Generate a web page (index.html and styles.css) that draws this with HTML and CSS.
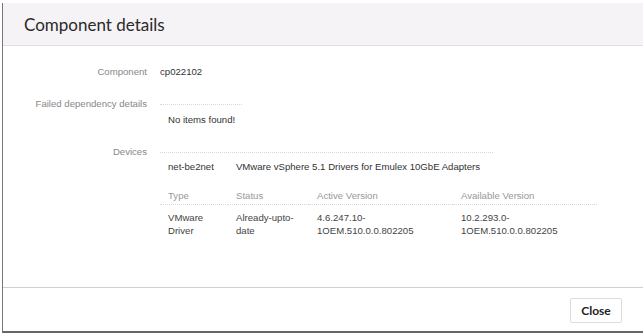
FILE: index.html
```html
<!DOCTYPE html>
<html>
<head>
<meta charset="utf-8">
<link rel="stylesheet" href="styles.css">
</head>
<body>
<div class="dialog">
  <div class="header">Component details</div>
  <div class="content">
    <div class="row">
      <div class="label">Component</div>
      <div class="value plain">cp022102</div>
    </div>
    <div class="row">
      <div class="label">Failed dependency details</div>
      <div class="value">
        <div class="rule rule-short"></div>
        <div class="empty">No items found!</div>
      </div>
    </div>
    <div class="row">
      <div class="label">Devices</div>
      <div class="value">
        <div class="rule rule-long"></div>
        <div class="device">
          <span class="dev-id">net-be2net</span>
          <span class="dev-name">VMware vSphere 5.1 Drivers for Emulex 10GbE Adapters</span>
        </div>
        <table class="grid">
          <thead>
            <tr><th class="c1">Type</th><th class="c2">Status</th><th class="c3">Active Version</th><th class="c4">Available Version</th></tr>
          </thead>
          <tbody>
            <tr><td>VMware<br>Driver</td><td>Already-upto-<br>date</td><td>4.6.247.10-<br>1OEM.510.0.0.802205</td><td>10.2.293.0-<br>1OEM.510.0.0.802205</td></tr>
          </tbody>
        </table>
      </div>
    </div>
  </div>
  <div class="footer">
    <button class="btn">Close</button>
  </div>
</div>
</body>
</html>
```
FILE: styles.css
```css
html, body {
  margin: 0;
  padding: 0;
  background: #fff;
}
body {
  font-family: "Liberation Sans", Arial, sans-serif;
  font-size: 9.6px;
  color: #333;
}
.dialog {
  margin: 3px 0 0 2px;
  width: 640px;
  height: 328px;
  border-left: 1px solid #777;
  border-bottom: 2px solid #666;
  display: flex;
  flex-direction: column;
  background: #fff;
}
.header {
  height: 42px;
  background: #f6f3f6;
  border-bottom: 1px solid #e2dfe2;
  display: flex;
  align-items: center;
  padding-left: 21px;
  font-family: Lato, "Open Sans", sans-serif;
  font-size: 17px;
  color: #2a2a2a;
}
.content {
  flex: 1;
  padding-top: 20px;
  display: flex;
  flex-direction: column;
  gap: 20px;
}
.row {
  display: grid;
  grid-template-columns: 144px 1fr;
  column-gap: 13px;
}
.label {
  text-align: right;
  color: #888;
  line-height: 12px;
}
.value {
  line-height: 12px;
}
.rule {
  margin-top: 6px;
  border-top: 1px dotted #d8d8d8;
}
.rule-short { width: 82px; }
.rule-long { width: 333px; }
.empty {
  padding: 9px 0 0 8px;
}
.device {
  padding: 8px 0 0 8px;
  display: flex;
  gap: 22px;
}
.grid {
  margin-top: 16px;
  border-collapse: collapse;
  line-height: 13px;
}
.grid th {
  text-align: left;
  font-weight: normal;
  color: #999;
  padding: 0 0 2px 8px;
  border-bottom: 1px dotted #d8d8d8;
}
.grid td {
  padding: 6px 0 0 8px;
  vertical-align: top;
  color: #444;
}
.c1 { width: 60px; }
.c2 { width: 73px; }
.c3 { width: 136px; }
.c4 { width: 136px; }
.footer {
  height: 43px;
  border-top: 1px solid #cfcfcf;
  display: flex;
  align-items: center;
  justify-content: flex-end;
  padding-right: 21px;
}
.btn {
  width: 52px;
  height: 25px;
  margin-top: 1px;
  background: #fff;
  border: 1px solid #dcdcdc;
  border-radius: 2px;
  font-family: Lato, sans-serif;
  font-weight: 700;
  font-size: 12px;
  color: #222;
  padding: 0;
}
```
